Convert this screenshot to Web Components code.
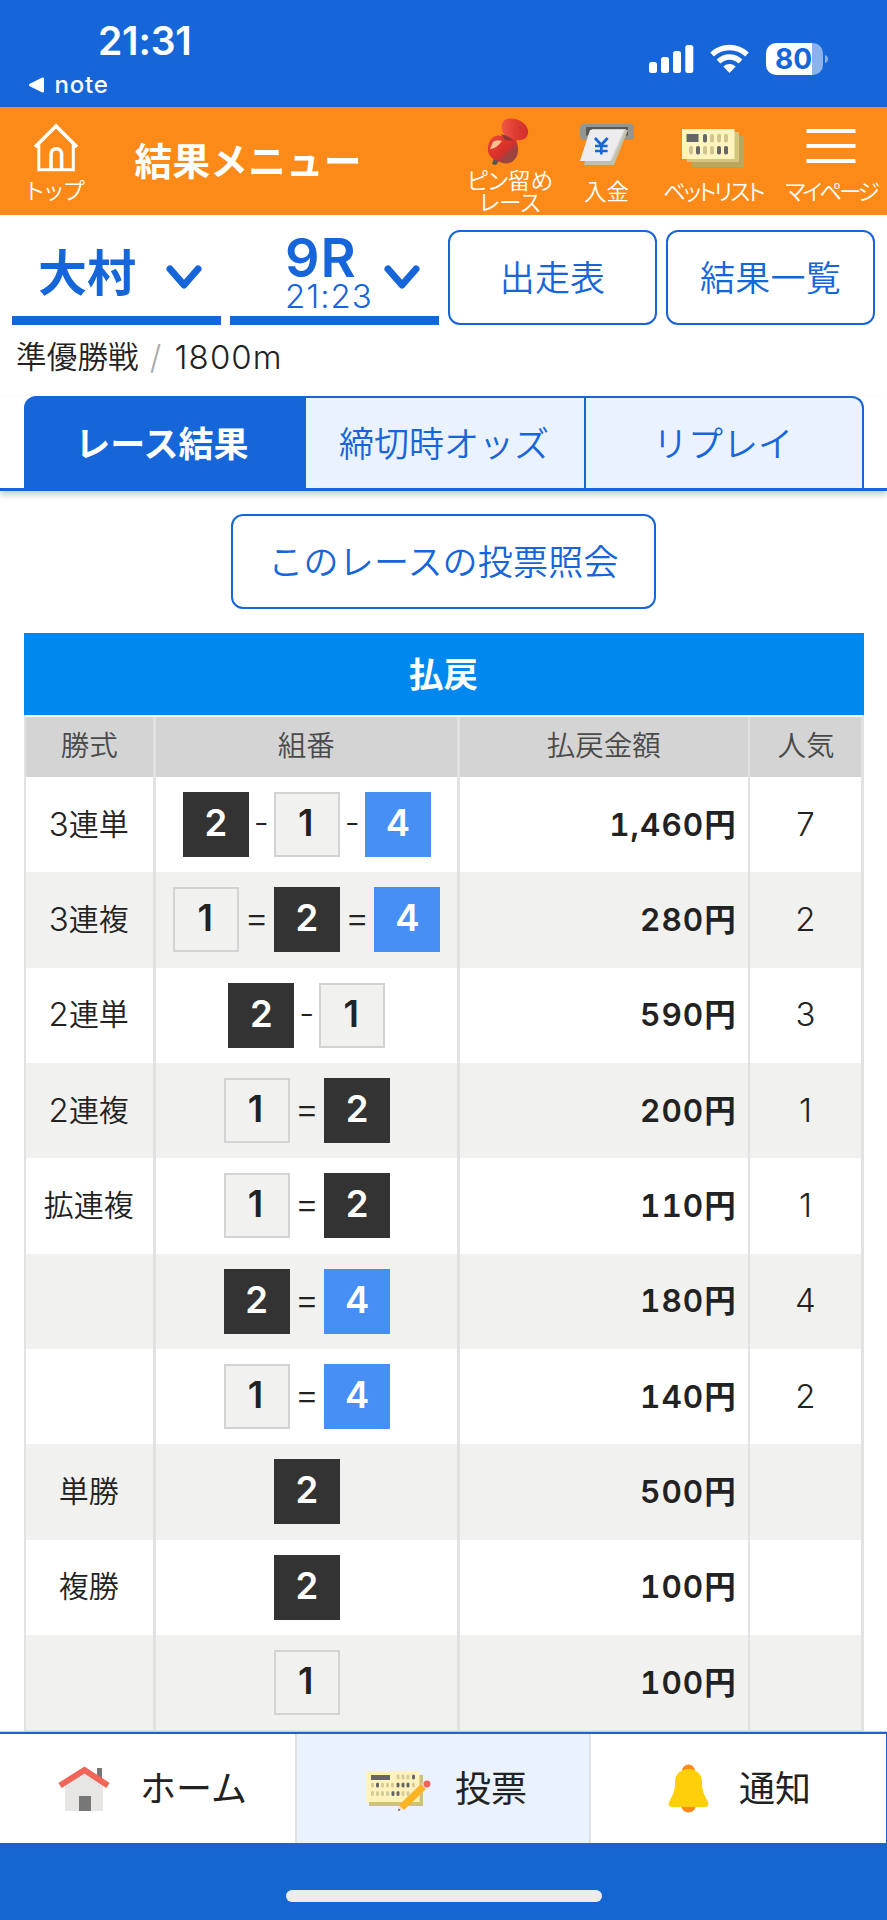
<!DOCTYPE html>
<html lang="ja">
<head>
<meta charset="utf-8">
<title>結果メニュー</title>
<style>
:root{--blue:#1666d9;--line:#e2e2e2;--sans:"Inter","Noto Sans CJK JP",sans-serif}
*{box-sizing:border-box}
body{margin:0;width:887px;height:1920px;overflow:hidden;background:#fff;color:#222;font-family:var(--sans);display:flex;flex-direction:column}
main{flex:1;min-height:0;overflow:hidden;display:flex;flex-direction:column}
.pickers{display:grid;grid-template-columns:209px 209px 209px 209px;gap:9px;padding:15px 0 0 12px;height:110px}
.inquiry{align-self:center;width:425px;height:95px;margin-top:23px;flex:none}
payout-table{margin:23.500px 23.500px 0}
</style>
</head>
<body>
<status-bar time="21:31" back="note" battery="80"></status-bar>
<app-header heading="結果メニュー"></app-header>
<main>
  <div class="pickers">
    <race-picker>大村</race-picker>
    <race-picker sub="21:23">9R</race-picker>
    <outline-button>出走表</outline-button>
    <outline-button>結果一覧</outline-button>
  </div>
  <race-caption grade="準優勝戦" distance="1800m"></race-caption>
  <tab-strip><tab-item selected>レース結果</tab-item><tab-item>締切時オッズ</tab-item><tab-item>リプレイ</tab-item></tab-strip>
  <outline-button class="inquiry">このレースの投票照会</outline-button>
  <payout-table heading="払戻">
    <payout-row kind="3連単" combo="2-1-4" amount="1,460円" rank="7"></payout-row>
    <payout-row kind="3連複" combo="1=2=4" amount="280円" rank="2"></payout-row>
    <payout-row kind="2連単" combo="2-1" amount="590円" rank="3"></payout-row>
    <payout-row kind="2連複" combo="1=2" amount="200円" rank="1"></payout-row>
    <payout-row kind="拡連複" combo="1=2" amount="110円" rank="1"></payout-row>
    <payout-row kind="" combo="2=4" amount="180円" rank="4"></payout-row>
    <payout-row kind="" combo="1=4" amount="140円" rank="2"></payout-row>
    <payout-row kind="単勝" combo="2" amount="500円" rank=""></payout-row>
    <payout-row kind="複勝" combo="2" amount="100円" rank=""></payout-row>
    <payout-row kind="" combo="1" amount="100円" rank=""></payout-row>
  </payout-table>
</main>
<bottom-nav></bottom-nav>
<script>
const define = (name, render) => customElements.define(name, class extends HTMLElement {
  connectedCallback() {
    if (this.shadowRoot) return;
    const t = document.createElement('template');
    t.innerHTML = '<style>*{box-sizing:border-box}svg{display:block;flex:none}</style>' + render(k => this.getAttribute(k) || '', this);
    this.attachShadow({mode: 'open'}).append(t.content.cloneNode(true));
  }
});

define('status-bar', a => `
<style>
:host{display:flex;justify-content:space-between;height:107px;flex:none;background:var(--blue);color:#fff}
.left{padding:18px 0 0 28px}
.time{font:600 39px/46px var(--sans);padding-left:70px;letter-spacing:-.2px}
.back{display:flex;align-items:center;gap:9.500px;font:500 24px/30px var(--sans);letter-spacing:.8px;margin-top:6px}
.right{display:flex;padding:43px 64px 0 0}
.bat{display:flex;align-items:center;width:57px;height:32px;border-radius:10px;background:linear-gradient(90deg,#fff 46px,#8ab2ec 46px);color:var(--blue);font:700 28px/32px var(--sans);padding-left:9px;letter-spacing:0;margin-left:17px}
</style>
<div class="left"><div class="time">${a('time')}</div>
<div class="back"><svg width="17" height="18" viewBox="0 0 17 18"><path d="M2.500 9 14.500 3v12z" fill="#fff" stroke="#fff" stroke-width="3" stroke-linejoin="round"/></svg><span>${a('back')}</span></div></div>
<div class="right">
<svg width="45" height="32" viewBox="0 0 45 32" fill="#fff"><rect x="0" y="19" width="8" height="11" rx="2.500"/><rect x="12" y="14" width="8" height="16" rx="2.500"/><rect x="24" y="8" width="8" height="22" rx="2.500"/><rect x="36.300" y="2" width="8" height="28" rx="2.500"/></svg>
<svg style="margin-left:16px" width="39" height="32" viewBox="0 0 39 32"><g fill="none" stroke="#fff" stroke-width="5.400"><path d="M2 11.500C12 2.200 27 2.200 37 11.500"/><path d="M8.500 18.500C15 12.500 24 12.500 30.500 18.500"/></g><path d="M13.300 23.400q6.200-4.600 12.400 0L19.500 30z" fill="#fff"/></svg>
<div class="bat">${a('battery')}</div>
<svg style="margin-right:-7px" width="7" height="32" viewBox="0 0 7 32"><path d="M2 12q3 1 3 4t-3 4z" fill="#8ab2ec"/></svg>
</div>`);

define('nav-action', a => `
<style>
:host{display:flex;flex-direction:column;align-items:center;color:#fff;font:350 22.500px/24px var(--sans);font-feature-settings:"palt";white-space:pre}
.label{text-align:center}
</style><slot name="icon"></slot><div class="label"><slot></slot></div>`);

const slipMarks = (cells, y) => cells.map(([x, dark]) => `<rect x="${x}" y="${y}" width="4" height="8.500" rx="1.800" fill="${dark ? '#666' : '#cfc591'}"/>`).join('');

define('app-header', a => `
<style>
:host{display:block;height:108px;flex:none;background:#fb8a18;color:#fff}
.bar{display:grid;grid-template-columns:112px 352px 92px 101px 112px 118px;height:100%}
h1{margin:0;padding:24px 0 0 22.500px;font:700 37.500px/56px "Noto Sans CJK JP",sans-serif;letter-spacing:.4px}
nav-action{padding-top:13px}
.top{letter-spacing:1.200px;padding-top:14px}
.pin{padding-top:9px;line-height:22px}
.bets{letter-spacing:-2.300px}
.mypage{letter-spacing:-3px;padding-left:6px}
</style>
<div class="bar">
<nav-action class="top"><svg slot="icon" width="48" height="58" viewBox="0 -1 48 58" fill="none" stroke="#fff"><path d="M3 25 24 4l21 21" stroke-width="3.600"/><path d="M6.800 22v25.800h34.500V22" stroke-width="3"/><path d="M19 47V32a5.300 5.300 0 0 1 10.600 0v15" stroke-width="3.600"/></svg>トップ</nav-action>
<h1>${a('heading')}</h1>
<nav-action class="pin"><svg slot="icon" width="50" height="54" viewBox="-1 0 50 54"><defs><linearGradient id="r" x1="0" x2="1"><stop stop-color="#ef5748"/><stop offset=".5" stop-color="#df3c31"/><stop offset="1" stop-color="#d2302c"/></linearGradient><linearGradient id="b" x1="0" y1="0" x2="1" y2="1"><stop stop-color="#ed4638"/><stop offset=".55" stop-color="#d52f29"/><stop offset=".7" stop-color="#9b4440"/></linearGradient></defs><path d="m8 42 5 3-3 4-4-1z" fill="#555"/><path d="M2 31C3 22 10 18 16 20l14 4c4 9 2 18-4 22-6 3-10 1-14-1C5 43 1 38 2 31z" fill="url(#b)"/><path d="M4 33q6 0 12-8-6-2-9 1z" fill="#fbc08d"/><path d="M17 6C22-1 39 3 42 14c1 8-5 11-12 10-8 0-18-8-13-18z" fill="url(#r)"/><path d="M15 18q8 2 13 7l-9-1z" fill="#8e3835"/><circle cx="34" cy="12" r="1" fill="#a33"/></svg>ピン留め
レース</nav-action>
<nav-action><svg slot="icon" width="56" height="60" viewBox="0 -1 56 60"><rect x="1" y="3" width="54" height="16" rx="4" fill="#959590"/><rect x="7" y="6" width="42" height="8.500" fill="#595957"/><path d="m13 8 36 1-14 35H5z" fill="#c2c0a6"/><path d="M13 8h34L33 40H1z" fill="#d2d2d0"/><path d="M11 9h34L31 40H1z" fill="#ededef"/><path d="m16 17 6.300 7 6.300-7M22.300 24v9.500M16 25h12.600M16 30h12.600" fill="none" stroke="#1666d9" stroke-width="2.700"/></svg>入金</nav-action>
<nav-action class="bets"><svg slot="icon" width="62" height="60" viewBox="0 -1 62 60"><path d="M10 15h52v31H10z" fill="#b7a85f"/><path d="M5 11h52v30H5z" fill="#d2c67d"/><path d="M0 8h52.500v30H0z" fill="#fff4be"/><rect x="4.500" y="13" width="12" height="8" fill="#666"/>${slipMarks([[21,1],[28,0],[35,0],[42,0]],13)}${slipMarks([[7,0],[14,1],[21,0],[28,0],[35,1],[42,1]],25)}</svg>ベットリスト</nav-action>
<nav-action class="mypage"><svg slot="icon" width="50" height="60" viewBox="0 -1 50 60" stroke="#fff" stroke-width="3.800"><path d="M.5 10h49M.5 25h49M.5 40h49"/></svg>マイページ</nav-action>
</div>`);

define('race-picker', a => `
<style>
:host{display:grid;grid-template-columns:1fr 36px;height:95px;border-bottom:9px solid var(--blue);color:var(--blue);padding:0 19px 0 26px}
.v{font:600 49px/60px var(--sans);margin-top:14px;white-space:nowrap}
.v.two{font:600 54px/46px var(--sans);margin:5px 0 0 29px;letter-spacing:1px}
small{display:block;font:300 33px/31px var(--sans);letter-spacing:1px}
svg{margin-top:35px}
</style>
<div class="v ${a('sub') ? 'two' : ''}"><slot></slot>${a('sub') ? `<small>${a('sub')}</small>` : ''}</div>
<svg width="36" height="26" viewBox="0 0 36 26"><path d="m4 4 14 16L32 4" fill="none" stroke="var(--blue)" stroke-width="7" stroke-linecap="round" stroke-linejoin="round"/></svg>`);

define('outline-button', () => `
<style>:host{display:flex;align-items:center;justify-content:center;height:95px;border:2px solid var(--blue);border-radius:12px;color:var(--blue);background:#fff;font:350 35px/50px var(--sans);letter-spacing:.2px;white-space:nowrap}</style><slot></slot>`);

define('race-caption', a => `
<style>:host{display:flex;height:71px;flex:none;padding:9px 0 0 16px;font:350 30.500px/46px var(--sans);letter-spacing:.2px}i{font-style:normal;color:#aaa;margin:0 13px 0 11px;font-weight:300;font-size:33px}.d{font-weight:300;font-size:33px;letter-spacing:1.100px}</style>
<span>${a('grade')}</span><i>/</i><span class="d">${a('distance')}</span>`);

define('tab-item', () => `
<style>:host{display:flex;align-items:center;justify-content:center;color:var(--blue);background:#eaf2fe;font:350 35px/50px var(--sans);border:2px solid var(--blue);border-width:2px 2px 0 0;padding:1px 1px 0 0}
:host([selected]){background:var(--blue);color:#fff;font-weight:700;border-radius:12px 0 0 0;padding-right:3px}:host(:last-child){border-radius:0 12px 0 0}</style><slot></slot>`);

define('tab-strip', () => `
<style>:host{display:grid;grid-template-columns:282px 280px 278px;height:95px;flex:none;padding:0 23.500px;border-bottom:3px solid var(--blue);box-shadow:0 4px 6px #0003}</style><slot></slot>`);

define('payout-table', a => `
<style>
:host{display:block;border:2px solid var(--line);border-top:0}
h2{margin:0 -2px 2px;height:82px;background:#0088ee;color:#fff;text-align:center;font:700 34.500px/84px var(--sans)}
.head{display:grid;grid-template-columns:127.500px 301px 288px 111px;column-gap:2.830px;background:var(--line);height:60.500px;font:350 28.500px/58px var(--sans);color:#4a4a4a;text-align:center}
.head span{background:#d4d4d4}
</style>
<h2>${a('heading')}</h2>
<div class="head"><span>勝式</span><span>組番</span><span>払戻金額</span><span>人気</span></div><slot></slot>`);

define('boat-chip', a => `
<style>:host{display:block;width:66px;height:65px;text-align:center;font:600 36.500px/63px var(--sans);background:#333;color:#fff}
:host([n="1"]){background:#f1f1f0;color:#222;border:2px solid #d3d3d3;line-height:59px;padding-right:2px}
:host([n="4"]){background:#488ff5}</style>${a('n')}`);

define('payout-row', a => `
<style>
:host{display:grid;grid-template-columns:127.500px 301px 288px 111px;column-gap:2.830px;background:var(--line);height:95.330px;font:350 30px/93px var(--sans);text-align:center;--bg:#fff}
:host(:nth-child(even)){--bg:#f1f1f0}
.cell{background:var(--bg);display:flex;align-items:center;justify-content:center}
.kind,.amount,.rank{padding-bottom:1px}
.kind{padding-right:1px}
.num{font-size:33px;font-weight:300}
.combo{padding-left:1px}
.sep{width:34.500px;height:93px;line-height:89px;font-size:38px;font-weight:300;display:flex;justify-content:center}.sep.dash{width:25px;font-size:33px;font-weight:350}
.amount{justify-content:flex-end;padding-right:11px;font-weight:600;font-size:31.500px;letter-spacing:1px;font-feature-settings:"tnum"}
.rank{font-size:33px;font-weight:300;padding-right:1px}
</style>
<div class="cell kind">${a('kind').replace(/\d/, '<span class="num">$&</span>')}</div>
<div class="cell combo">${[...a('combo')].map(c => /\d/.test(c) ? `<boat-chip n="${c}"></boat-chip>` : `<span class="sep ${c === '-' ? 'dash' : ''}">${c}</span>`).join('')}</div>
<div class="cell amount">${a('amount')}</div>
<div class="cell rank">${a('rank')}</div>`);

define('bottom-nav', () => `
<style>
:host{display:flex;flex-direction:column;height:189px;flex:none;border-top:1px solid #ccc;background:#1566d0}
.items{display:grid;grid-template-columns:297px 294px 295px;height:111px;border-top:2px solid #1666d0}
.items div{display:flex;align-items:center;background:#fff;border-right:2px solid var(--line);font:400 36px/60px var(--sans)}
.items div.on{background:#eaf2fe}.items div:last-child{border-right:0}
.grip{width:316px;height:12px;border-radius:6px;background:#ececec;margin:47px 0 0 286px}
</style>
<div class="items">
<div><svg style="margin:0 30px 0 58px" width="52" height="48" viewBox="0 0 52 48"><path d="M39 3h5v17h-5z" fill="#777"/><path d="M7 19 26 7l19 12v27H7z" fill="#e8e6e4"/><path d="M21 31h12v15H21z" fill="#777"/><path d="M2 20.500 26.500 5 50 20.500" fill="none" stroke="#ef6558" stroke-width="6"/></svg>ホーム</div>
<div class="on"><svg style="margin:0 24px 0 68px" width="66" height="48" viewBox="0 0 66 48"><path d="M4 10h54v31H4z" fill="#cdc27c"/><path d="M1 6h53.500v31H1z" fill="#fff2bc"/><path d="M6 10h19v5H6z" fill="#666"/><g stroke-width="3" stroke-linecap="round"><path d="M33 11v2M38 11v2M43 11v2M7.500 19v2M17.500 19v2M22.500 19v2M27.500 19v2M48.500 19v2M7.500 27.500v2M12.500 27.500v2M17.500 27.500v2M22.500 27.500v2M38 27.500v2M43 27.500v2" stroke="#d5cb98"/><path d="M48.500 11v2M12.500 19v2M33 19v2M38 19v2M43 19v2M28 27.500v2M33 27.500v2" stroke="#666"/></g><path d="m33 46 2-7 5 4z" fill="#f5dcc0"/><path d="m33 46 .8-2.500 1.600 1.400z" fill="#444"/><path d="m34 40 22-21 5 5-22 21z" fill="#fcb324"/><path d="m56 19 3-2 4.500 4.500-2.500 2.500z" fill="#ddd"/><circle cx="62" cy="19" r="3.400" fill="#ef6558"/></svg>投票</div>
<div><svg style="margin:0 30px 0 77px" width="41" height="50" viewBox="0 0 41 50"><circle cx="20.500" cy="7" r="6.500" fill="#fb8a18"/><path d="M13 41h15a7.500 7.500 0 0 1-15 0z" fill="#fb8a18"/><path d="M7 18C7 10 13 5 20.500 5S34 10 34 18c0 10 2 12 6 20 1 3 0 5-3 5H4c-3 0-4-2-3-5 4-8 6-10 6-20z" fill="#ffcf0c"/></svg>通知</div>
</div><div class="grip"></div>`);
</script>
</body>
</html>
